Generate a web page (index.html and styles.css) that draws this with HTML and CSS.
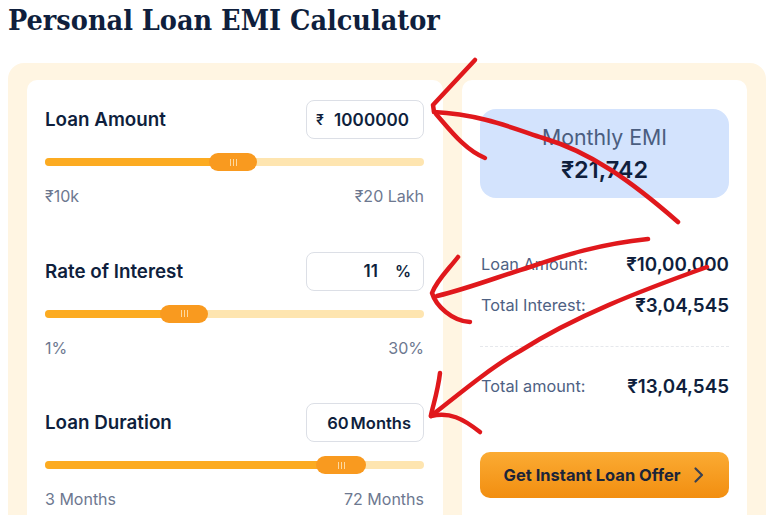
FILE: index.html
```html
<!DOCTYPE html>
<html lang="en">
<head>
<meta charset="utf-8">
<title>Personal Loan EMI Calculator</title>
<link rel="stylesheet" href="styles.css">
</head>
<body>
<main class="page">
  <h1 class="title">Personal Loan EMI Calculator</h1>
  <section class="card">
    <div class="panel inputs">
      <div class="field">
        <div class="field-head">
          <span class="field-label">Loan Amount</span>
          <div class="value-box box-left"><span class="unit-small">₹</span><span>1000000</span></div>
        </div>
        <div class="track"><div class="fill" style="width:176px"></div><div class="handle" style="left:164px"><i></i><i></i><i></i></div></div>
        <div class="range"><span>₹10k</span><span>₹20 Lakh</span></div>
      </div>
      <div class="field">
        <div class="field-head">
          <span class="field-label">Rate of Interest</span>
          <div class="value-box box-pct"><span class="num">11</span><span>%</span></div>
        </div>
        <div class="track"><div class="fill" style="width:127px"></div><div class="handle" style="left:115px"><i></i><i></i><i></i></div></div>
        <div class="range"><span>1%</span><span>30%</span></div>
      </div>
      <div class="field">
        <div class="field-head">
          <span class="field-label">Loan Duration</span>
          <div class="value-box box-months"><span>60</span><span>Months</span></div>
        </div>
        <div class="track"><div class="fill" style="width:283px"></div><div class="handle handle-wide" style="left:271px"><i></i><i></i><i></i></div></div>
        <div class="range"><span>3 Months</span><span>72 Months</span></div>
      </div>
    </div>
    <div class="panel summary">
      <div class="emi">
        <div class="emi-label">Monthly EMI</div>
        <div class="emi-value">₹21,742</div>
      </div>
      <div class="rows">
        <div class="row"><span>Loan Amount:</span><strong>₹10,00,000</strong></div>
        <div class="row"><span>Total Interest:</span><strong>₹3,04,545</strong></div>
        <div class="divider"></div>
        <div class="row"><span>Total amount:</span><strong>₹13,04,545</strong></div>
      </div>
      <a class="cta" href="#">Get Instant Loan Offer
        <svg class="chev" width="12" height="18" viewBox="0 0 12 18" aria-hidden="true"><path d="M2.5 2.5 9 9l-6.500 6.500" fill="none" stroke="#3a4152" stroke-width="2.200" stroke-linecap="round" stroke-linejoin="round"/></svg>
      </a>
    </div>
  </section>
</main>
<svg class="scribble" width="768" height="515" viewBox="0 0 768 515" aria-hidden="true">
  <g fill="none" stroke="#e0181c" stroke-width="4.500" stroke-linecap="round" stroke-linejoin="round">
    <path d="M475 60 433 105l1 7"/>
    <path d="M434 112C480 114 515 129 543 138 590 152 630 180 678 222"/>
    <path d="M436 114C450 130 465 150 485 158"/>
    <path d="M458 257C448 270 437 280 432 293 436 306 452 321 470 322"/>
    <path d="M437 296C470 288 500 276 530 267 565 255 600 244 648 239"/>
    <path d="M440 373C438 390 434 402 431 415"/>
    <path d="M431 416C450 412 462 418 480 432"/>
    <path d="M431 416C470 385 495 365 520 351 575 316 640 291 707 267"/>
  </g>
</svg>
</body>
</html>
```
FILE: styles.css
```css
* { box-sizing: border-box; }
html, body { margin: 0; height: 100%; overflow: hidden; }
body {
  background: #fff;
  position: relative;
  font-family: Inter, "Liberation Sans", sans-serif;
  color: #0f1f3d;
}
.page { padding: 0 2px 0 8px; height: 515px; overflow: hidden; }
.title {
  margin: 0;
  height: 63px;
  padding-top: 2px;
  font-family: "DejaVu Serif", "Liberation Serif", serif;
  font-stretch: condensed;
  font-size: 28.500px;
  line-height: 36px;
  font-weight: 700;
  letter-spacing: 0;
  color: #0f1f3d;
}
.card {
  display: flex;
  gap: 19px;
  height: 520px;
  padding: 17px 19px;
  background: #fff5e2;
  border-radius: 16px;
}
.panel { background: #fff; border-radius: 10px; height: 500px; }
.inputs { width: 416px; padding: 20px 19px 0 18px; }
.summary { width: 285px; padding: 29px 18px 0; }
.field { height: 151.500px; }
.field-head { display: flex; justify-content: space-between; align-items: center; }
.field-label { font-size: 18.800px; font-weight: 600; }
.value-box {
  width: 118px;
  height: 39px;
  border: 1px solid #dcdfe6;
  border-radius: 8px;
  display: flex;
  align-items: center;
  font-size: 17px;
  font-weight: 600;
}
.box-left { padding-left: 9px; gap: 10px; letter-spacing: 0.1px; }
.unit-small { font-size: 14px; }
.box-pct { justify-content: flex-end; padding-right: 12px; gap: 17px; font-size: 16px; }
.box-pct .num { font-size: 17px; }
.box-months { justify-content: flex-end; padding-right: 12px; gap: 2px; font-size: 16.500px; }
.track {
  position: relative;
  margin-top: 19px;
  height: 8px;
  border-radius: 4px;
  background: #fee5b0;
}
.fill { height: 8px; border-radius: 4px; background: #fcab21; }
.handle {
  position: absolute;
  top: -5px;
  width: 48px;
  height: 18px;
  border-radius: 9px;
  background: #f99a1f;
  display: flex;
  justify-content: center;
  align-items: center;
  gap: 2px;
}
.handle-wide { width: 50px; }
.handle i { width: 1px; height: 7px; background: #fdd9a0; }
.range {
  display: flex;
  justify-content: space-between;
  margin-top: 20px;
  font-size: 16px;
  line-height: 20px;
  color: #6d7890;
}
.emi {
  height: 89px;
  padding-top: 14px;
  background: #d3e3fd;
  border-radius: 16px;
  text-align: center;
}
.emi-label { font-size: 21.300px; line-height: 28px; color: #4a5d80; }
.emi-value { margin-top: 4px; font-size: 23.500px; line-height: 30px; font-weight: 600; }
.rows { margin-top: 51px; }
.row {
  display: flex;
  justify-content: space-between;
  align-items: center;
  height: 30px;
  margin-bottom: 11px;
  padding-left: 1px;
  font-size: 16.300px;
  color: #4e6183;
}
.row strong { font-size: 18.800px; font-weight: 600; color: #0f1f3d; }
.divider { margin: 26px 0 24px; border-top: 1px dashed #e6e8ec; }
.cta {
  display: flex;
  align-items: center;
  justify-content: center;
  gap: 13px;
  height: 46px;
  margin-top: 51px;
  border-radius: 10px;
  background: linear-gradient(#fbab33, #f28e10);
  font-size: 16.500px;
  font-weight: 700;
  color: #1c2438;
  text-decoration: none;
}
.scribble { position: absolute; left: 0; top: 0; pointer-events: none; }
```
